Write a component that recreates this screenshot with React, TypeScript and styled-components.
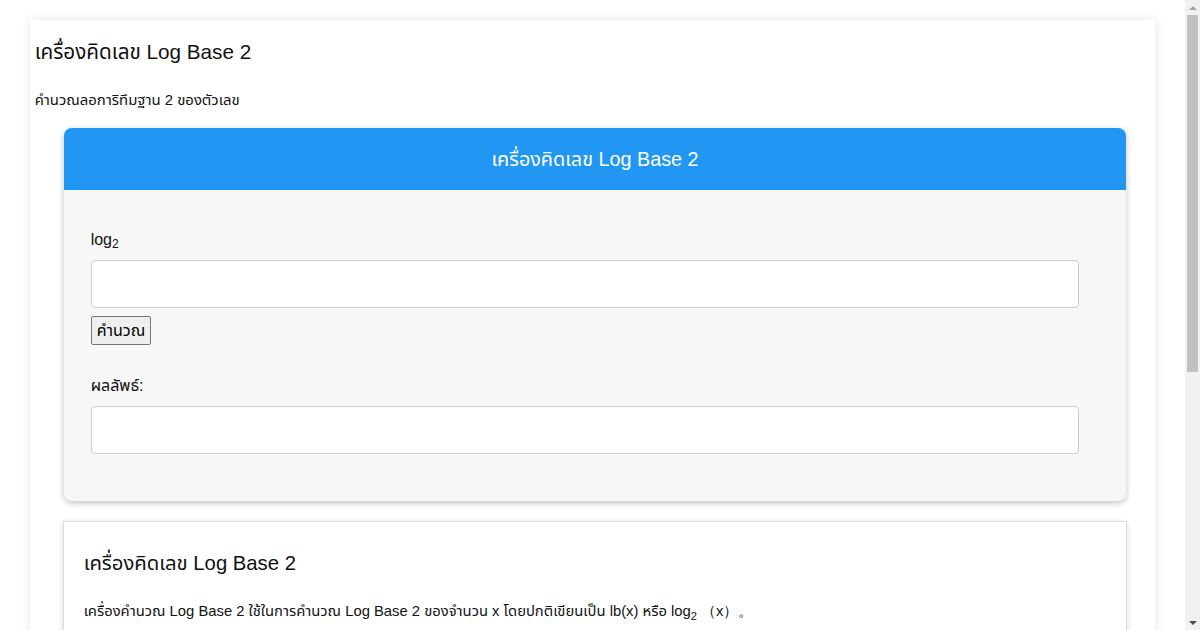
import React, { useState } from "react";
import styled, { createGlobalStyle } from "styled-components";

const GlobalStyle = createGlobalStyle`
  html, body {
    margin: 0;
    padding: 0;
    background: #ffffff;
    color: #111;
    font-family: Arial, "Liberation Sans", "Noto Sans Thai", "Noto Sans Thai UI", sans-serif;
  }
`;

const Viewport = styled.div`
  display: flex;
  height: 100vh;
  overflow: hidden;
`;

const ScrollArea = styled.div`
  flex: 1;
  min-width: 0;
  overflow: hidden;
`;

const Scrollbar = styled.div`
  width: 15px;
  flex-shrink: 0;
  display: flex;
  flex-direction: column;
  align-items: center;
  background: #f1f1f1;
`;

const Arrow = styled.div<{ $down?: boolean }>`
  width: 15px;
  height: 15px;
  display: flex;
  align-items: center;
  justify-content: center;

  &::before {
    content: "";
    border-left: 4px solid transparent;
    border-right: 4px solid transparent;
    ${(p) =>
      p.$down
        ? "border-top: 4px solid #505050;"
        : "border-bottom: 4px solid #a3a3a3;"}
  }
`;

const Thumb = styled.div`
  width: 11px;
  height: 357px;
  background: #c1c1c1;
`;

const Track = styled.div`
  flex: 1;
`;

const Page = styled.div`
  width: 95%;
  margin: 20px auto;
  padding: 10px 5px 30px;
  box-sizing: border-box;
  background: #fff;
  box-shadow: 0 0 10px rgba(0, 0, 0, 0.1);
`;

const Title = styled.h1`
  font-size: 20.7px;
  font-weight: normal;
  line-height: 24px;
  margin: 10px 0 27px;
`;

const Subtitle = styled.p`
  font-size: 14.9px;
  line-height: 18px;
  margin: 0 0 19px;
`;

const Calculator = styled.div`
  margin: 0 24px 0 29px;
  border-radius: 8px;
  overflow: hidden;
  background: #f7f7f7;
  box-shadow: 0 2px 6px rgba(0, 0, 0, 0.25);
`;

const CalcHeader = styled.div`
  background: #2196f3;
  color: #fff;
  text-align: center;
  font-size: 19.8px;
  line-height: 24px;
  padding: 19px 0;
`;

const CalcBody = styled.div`
  padding: 41px 27px 47px;
`;

const Label = styled.label`
  display: block;
  font-size: 16px;
  line-height: 18px;
  margin-bottom: 7px;

  sub {
    font-size: 12px;
    vertical-align: -3px;
  }
`;

const ResultLabel = styled(Label)`
  margin-top: 32px;
  margin-bottom: 11px;
`;

const Field = styled.input`
  display: block;
  width: 98%;
  height: 48px;
  box-sizing: border-box;
  border: 1px solid #ccc;
  border-radius: 4px;
  background: #fff;
  font-size: 16px;
  padding: 0 10px;
  font-family: inherit;
`;

const CalcButton = styled.button`
  display: block;
  margin-top: 8px;
  height: 29px;
  padding: 1px 5px;
  font-size: 16px;
  font-family: inherit;
  color: #000;
  background: #efefef;
  border: 1px solid #767676;
  border-radius: 2px;
`;

const InfoCard = styled.div`
  margin: 20px 23px 0 28px;
  border: 1px solid #ddd;
  background: #fff;
  padding: 29px 20px 10px;
  box-shadow: 0 2px 6px rgba(0, 0, 0, 0.15);
`;

const InfoTitle = styled.h2`
  font-size: 20.3px;
  font-weight: normal;
  line-height: 24px;
  margin: 0 0 24px;
`;

const InfoText = styled.p`
  font-size: 14.8px;
  line-height: 24px;
  margin: 0 0 16px;

  sub {
    font-size: 11px;
  }
`;

export default function App() {
  const [value, setValue] = useState("");
  const [result, setResult] = useState("");

  const onCalculate = () => {
    const x = parseFloat(value);
    if (isNaN(x) || x <= 0) {
      setResult("");
      return;
    }
    setResult(String(Math.log2(x)));
  };

  return (
    <>
      <GlobalStyle />
      <Viewport>
        <ScrollArea>
          <Page>
            <Title>เครื่องคิดเลข Log Base 2</Title>
            <Subtitle>คำนวณลอการิทึมฐาน 2 ของตัวเลข</Subtitle>
            <Calculator>
              <CalcHeader>เครื่องคิดเลข Log Base 2</CalcHeader>
              <CalcBody>
                <Label htmlFor="x">
                  log<sub>2</sub>
                </Label>
                <Field
                  id="x"
                  type="text"
                  value={value}
                  onChange={(e) => setValue(e.target.value)}
                />
                <CalcButton onClick={onCalculate}>คำนวณ</CalcButton>
                <ResultLabel htmlFor="result">ผลลัพธ์:</ResultLabel>
                <Field id="result" type="text" value={result} readOnly />
              </CalcBody>
            </Calculator>
            <InfoCard>
              <InfoTitle>เครื่องคิดเลข Log Base 2</InfoTitle>
              <InfoText>
                เครื่องคำนวณ Log Base 2 ใช้ในการคำนวณ Log Base 2 ของจำนวน x
                โดยปกติเขียนเป็น lb(x) หรือ log<sub>2</sub> （x）。
              </InfoText>
              <InfoText>
                ตัวอย่างเช่น log<sub>2</sub>(8) = 3 เพราะ 2<sup>3</sup> = 8
              </InfoText>
            </InfoCard>
          </Page>
        </ScrollArea>
        <Scrollbar>
          <Arrow />
          <Thumb />
          <Track />
          <Arrow $down />
        </Scrollbar>
      </Viewport>
    </>
  );
}
